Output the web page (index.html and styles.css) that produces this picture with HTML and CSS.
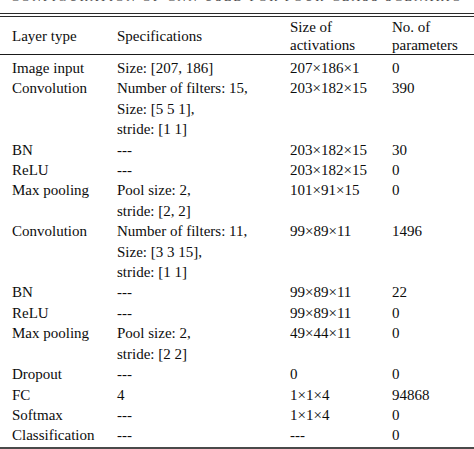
FILE: index.html
```html
<!DOCTYPE html>
<html>
<head>
<meta charset="utf-8">
<link rel="stylesheet" href="styles.css">
</head>
<body>
<div class="caption"><div class="caption-text">CONFIGURATION OF CNN USED FOR FOUR-CLASS SCENARIO</div></div>
<table class="cnn">
  <colgroup>
    <col class="c1"><col class="c2"><col class="c3"><col class="c4">
  </colgroup>
  <thead>
    <tr>
      <th>Layer type</th>
      <th>Specifications</th>
      <th>Size of<br>activations</th>
      <th>No. of<br>parameters</th>
    </tr>
  </thead>
  <tbody>
    <tr class="first"><td>Image input</td><td>Size: [207, 186]</td><td>207×186×1</td><td>0</td></tr>
    <tr><td>Convolution</td><td>Number of filters: 15,<br>Size: [5 5 1],<br>stride: [1 1]</td><td>203×182×15</td><td>390</td></tr>
    <tr><td>BN</td><td>---</td><td>203×182×15</td><td>30</td></tr>
    <tr><td>ReLU</td><td>---</td><td>203×182×15</td><td>0</td></tr>
    <tr><td>Max pooling</td><td>Pool size: 2,<br>stride: [2, 2]</td><td>101×91×15</td><td>0</td></tr>
    <tr><td>Convolution</td><td>Number of filters: 11,<br>Size: [3 3 15],<br>stride: [1 1]</td><td>99×89×11</td><td>1496</td></tr>
    <tr><td>BN</td><td>---</td><td>99×89×11</td><td>22</td></tr>
    <tr><td>ReLU</td><td>---</td><td>99×89×11</td><td>0</td></tr>
    <tr><td>Max pooling</td><td>Pool size: 2,<br>stride: [2 2]</td><td>49×44×11</td><td>0</td></tr>
    <tr><td>Dropout</td><td>---</td><td>0</td><td>0</td></tr>
    <tr><td>FC</td><td>4</td><td>1×1×4</td><td>94868</td></tr>
    <tr><td>Softmax</td><td>---</td><td>1×1×4</td><td>0</td></tr>
    <tr class="last"><td>Classification</td><td>---</td><td>---</td><td>0</td></tr>
  </tbody>
</table>
</body>
</html>
```

FILE: styles.css
```css
html, body {
  margin: 0;
  padding: 0;
  background: #ffffff;
}
body {
  width: 474px;
  height: 449px;
  overflow: hidden;
  font-family: "Liberation Serif", "Times New Roman", serif;
  color: #0d0d0d;
}
.caption {
  height: 8px;
  overflow: hidden;
}
.caption-text {
  margin-top: -9px;
  text-align: center;
  font-size: 12px;
  line-height: 12px;
  letter-spacing: 2.2px;
  color: #444444;
  white-space: nowrap;
}
.cnn {
  margin-top: 5px;
  width: 474px;
  table-layout: fixed;
  border-collapse: collapse;
  border-top: 4px double #2a2a2a;
  border-bottom: 3px solid #4a4a4a;
  font-size: 15px;
}
.c1 { width: 105px; }
.c2 { width: 173px; }
.c3 { width: 102px; }
.c4 { width: 94px; }
.cnn th {
  font-weight: normal;
  text-align: left;
  vertical-align: middle;
  line-height: 18px;
  padding: 1px 0 0 12px;
  border-bottom: 1px solid #1a1a1a;
}
.cnn td {
  text-align: left;
  vertical-align: top;
  line-height: 20.4px;
  padding: 0 0 0 12px;
  white-space: nowrap;
}
.cnn tr.first td {
  padding-top: 3px;
}
.cnn tr.last td {
  padding-bottom: 1px;
}
```
